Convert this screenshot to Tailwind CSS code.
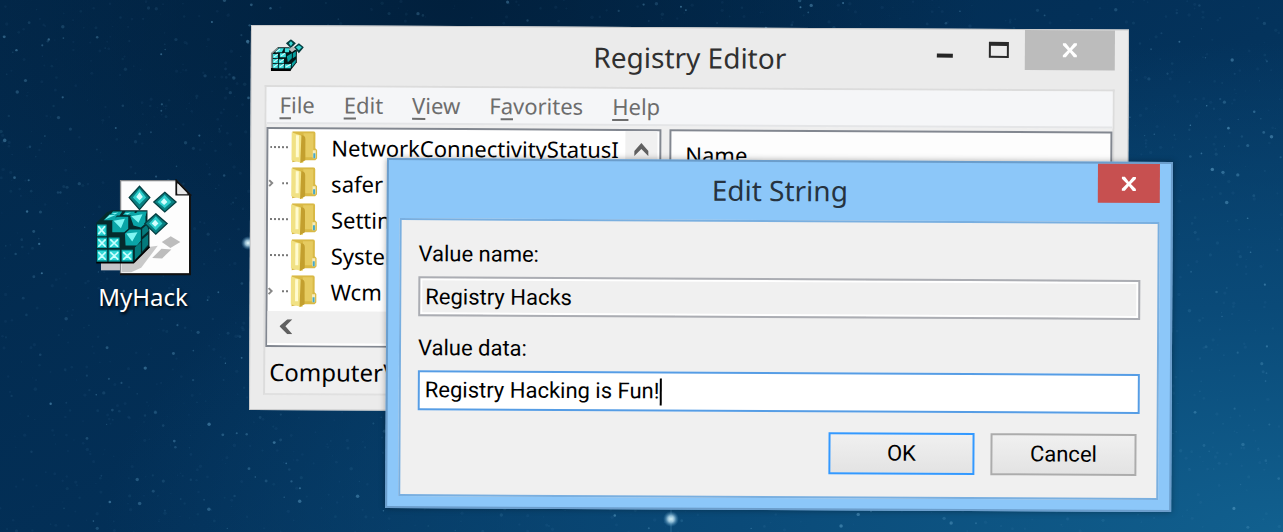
<!doctype html>
<html lang="en">

<head>
    <meta charset="UTF-8">
    <meta name="viewport" content="width=device-width, initial-scale=1.0">
    <title>Registry Editor</title>
    <script src="https://cdn.jsdelivr.net/npm/@tailwindcss/browser@4"></script>
</head>

<body class="relative h-screen overflow-hidden bg-[#02294c] font-['Noto_Sans',sans-serif] text-black">
    <!-- Wallpaper -->
    <div class="absolute inset-0 bg-[radial-gradient(ellipse_at_100%_100%,#11608f_0%,#0a4a78_30%,transparent_65%),radial-gradient(ellipse_at_35%_0%,#01203d_0%,transparent_45%),linear-gradient(150deg,#02284a_0%,#033058_50%,#083f6c_100%)]"></div>
    <svg id="stars" class="absolute inset-0 h-full w-full" aria-hidden="true">
        <defs>
            <radialGradient id="glow">
                <stop offset="0" stop-color="#eaffff"></stop>
                <stop offset=".4" stop-color="#b5dcef" stop-opacity=".8"></stop>
                <stop offset="1" stop-color="#3d86b5" stop-opacity="0"></stop>
            </radialGradient>
        </defs>
        <circle cx="671" cy="519" r="8" fill="url(#glow)"></circle>
        <path d="M671 508v24" stroke="#6db0d4" stroke-opacity=".3"></path>
        <circle cx="248" cy="243" r="7" fill="url(#glow)"></circle>
    </svg>

    <!-- Desktop icon -->
    <a href="#" class="absolute left-[83px] top-[179px] flex w-[120px] flex-col items-center">
        <svg class="h-[97px] w-[97px]" viewBox="45 40 290 292">
            <path d="M62 285h60v30H62z" fill="#c4c4c8"></path>
            <path d="M121 45h168l41 42v239H121z" fill="#fdfdfd" stroke="#85888b" stroke-width="4"></path>
            <path d="M289 45v42h41zM330 90v237H119" fill="none" stroke="#111" stroke-width="6"></path>
            <path d="M292 55v31h31z" fill="#e8e8e8"></path>
            <path d="M205 245l28-4-50 66-30 14h-28v-28z" fill="#c9c9c9"></path>
            <path d="M245 230l27-18 29 18-30 18zM216 278l28-28 30 2-28 27z" fill="#bdbdbd"></path>
            <path d="M48 172l32-32 16-6h106v40l6 8v64l-50 46H48z" fill="#052b2d"></path>
            <g fill="#0aa5a7">
                <path d="M50 177h29v35H50zM50 216h30v32H50zM50 253h31v35H50zM85 216h33v32H85zM85 253h34v35H85zM124 253h34v35h-34z"></path>
                <path d="M70 164l18-18h24l-10 18zM90 148l8-10h28l-8 12zM128 148l8-10h28l-4 12zM164 146l8-8h28l-4 14z"></path>
                <path d="M96 166l14-12h34v36l-12 10H96zM150 152l10-10h36v32l-14 12-22-6zM134 204l14-12h34v34l-12 14h-34z"></path>
                <path d="M164 246l18-16v34l-18 20zM186 222l18-16v32l-18 20zM186 190l14-12 6 18-20 18z" fill="#047a7c"></path>
            </g>
            <g fill="#7ff5f3">
                <path d="M100 166l34-6-12 28zM153 152l34-6-12 26zM138 204l34-4-16 28z"></path>
                <path d="M74 162l14-14h18zM94 144l20-3-10 6zM132 144l20-3-10 6z"></path>
            </g>
            <g fill="#2fd6d5">
                <path d="M53 181h23v27H53zM53 220h24v25H53zM53 257h25v27H53zM88 220h27v25H88zM88 257h28v27H88zM127 257h28v27h-28z"></path>
            </g>
            <path d="M54 182l20 24m0-24L54 206M54 222l22 22m0-22l-22 22M54 260l22 23m0-23l-22 23M90 222l23 22m0-22l-23 22M90 260l24 23m0-23l-24 23M129 260l24 23m0-23l-24 23" stroke="#c9fffe" stroke-width="5"></path>
            <g fill="#087f81" stroke="#043f42" stroke-width="4">
                <path d="M178 62l31 34-31 36-31-36zM254 80l34 29-34 30-33-30zM227 145l34 29-34 32-33-32z"></path>
            </g>
            <g fill="#2fcfcd">
                <path d="M178 70l20 26-20 20-20-20zM254 88l20 21-20 18-22-18zM227 153l20 21-20 20-20-20z"></path>
            </g>
            <path d="M178 80l10 14-10 10-10-10zM252 98l10 11-10 9-10-9zM225 163l10 11-10 10-10-10z" fill="#d5ffff"></path>
            <path d="M48 292h112l48-48" fill="none" stroke="#000" stroke-width="5"></path>
        </svg>
        <span class="text-[24px] leading-[42px] text-white [text-shadow:1px_2px_3px_#000]">MyHack</span>
    </a>

    <!-- Registry Editor -->
    <section class="absolute left-[251px] top-[25px] flex h-[385px] w-[878px] origin-top-left rotate-[0.3deg] flex-col border border-[#c9cacb] bg-[#ebebeb] px-[13px] pb-[14px]">
        <header class="relative flex h-[59px] shrink-0 items-center justify-center">
            <svg class="absolute left-[6px] top-[13px] h-8 w-[33px]" viewBox="0 0 33 32">
                <path d="M1 14l6-6h11l8 3v12l-6 8H1z" fill="#021718"></path>
                <path d="M1 14v17h19" fill="none" stroke="#000" stroke-width="2"></path>
                <path d="M1 29V14l6-5" fill="none" stroke="#8c9291" stroke-width="1.5"></path>
                <path d="M2 15h5v4H2zM2 20h5v4H2zM2 25h5v4H2zM8 20h5v4H8zM8 25h5v4H8zM14 25h6v4h-6zM4 13l4-4h5l-2 4zM9 14h6v4H9zM14 9h5l-1 4h-4z" fill="#3edfdd"></path>
                <path d="M16 17l5-3v5l-4 4zM21 24l4-4v3l-4 5zM22 14l3-2v5l-3 2z" fill="#08a0a0"></path>
                <path d="M3 18l4-3M3 23l4-3M3 28l4-3M9 23l4-3M9 28l4-3M15 28l5-3M5 13l4-3M10 17l4-3" stroke="#e0ffff"></path>
                <path d="M20 0l5 4-5 5-5-5zM28 4l5 4-5 6-5-6z" fill="#033e40"></path>
                <path d="M20 2l2 2-2 3-2-3zM28 6l3 2-3 3-3-3z" fill="#37d5d3"></path>
                <path d="M22 7l3 3-4 3-3-3z" fill="#b8bcbc"></path>
            </svg>
            <h1 class="pb-[2px] text-[28px] leading-9 text-[#303030]">Registry Editor</h1>
            <div class="absolute right-0 top-0 flex items-start">
                <button class="flex h-10 w-[54px] items-center justify-center" aria-label="Minimize">
                    <svg class="h-[18px] w-[18px]" viewBox="0 0 18 18"><path d="M1 13h16v4H1z" fill="#252525"></path></svg>
                </button>
                <button class="flex h-10 w-[53px] items-center justify-center" aria-label="Maximize">
                    <svg class="h-[18px] w-[22px]" viewBox="0 0 22 18"><path d="M1 1h20v16H1zM3 5v10h16V5z" fill="#2a2a2a" fill-rule="evenodd"></path></svg>
                </button>
                <button class="flex h-10 w-[90px] items-center justify-center bg-[#bcbcbc]" aria-label="Close">
                    <svg class="h-4 w-[18px]" viewBox="0 0 18 16"><path d="M2 1h3l4 5 4-5h3v2l-5 5 5 5v2h-3l-4-5-4 5H2v-2l5-5-5-5z" fill="#fff"></path></svg>
                </button>
            </div>
        </header>

        <div class="flex min-h-0 flex-1 flex-col border-2 border-[#dcdcdc] border-b-[#e0e0e0] bg-[#efefef]">
            <nav class="flex h-[37px] shrink-0 items-center gap-[29px] border-b-2 border-[#e4e5e7] bg-[#f5f6f8] px-[13px] text-[22px] text-[#6d6d6d] decoration-2 underline-offset-4">
                <a href="#"><u>F</u>ile</a>
                <a href="#"><u>E</u>dit</a>
                <a href="#"><u>V</u>iew</a>
                <a href="#">F<u>a</u>vorites</a>
                <a href="#"><u>H</u>elp</a>
            </nav>

            <div class="mt-[3px] flex h-[220px] shrink-0 gap-2">
                <div class="flex w-[395px] flex-col border-2 border-[#828790] bg-white">
                    <div class="flex min-h-0 flex-1">
                        <ul class="min-w-0 flex-1 text-[22px] leading-9 whitespace-nowrap">
                            <li class="flex h-9 items-center"><span class="mx-[2px] h-[2px] w-[19px] shrink-0 bg-[repeating-linear-gradient(90deg,#777_0_2px,transparent_2px_4px)]"></span><span class="folder"></span>NetworkConnectivityStatusI</li>
                            <li class="flex h-9 items-center"><span class="flex w-[23px] shrink-0 items-center justify-between pr-[2px]"><svg class="h-2 w-[6px]" viewBox="0 0 6 8"><path d="M1 1l3 3-3 3" fill="none" stroke="#888" stroke-width="2"></path></svg><span class="h-[2px] w-[7px] bg-[repeating-linear-gradient(90deg,#777_0_2px,transparent_2px_4px)]"></span></span><span class="folder"></span>safer</li>
                            <li class="flex h-9 items-center"><span class="mx-[2px] h-[2px] w-[19px] shrink-0 bg-[repeating-linear-gradient(90deg,#777_0_2px,transparent_2px_4px)]"></span><span class="folder"></span>Settings</li>
                            <li class="flex h-9 items-center"><span class="mx-[2px] h-[2px] w-[19px] shrink-0 bg-[repeating-linear-gradient(90deg,#777_0_2px,transparent_2px_4px)]"></span><span class="folder"></span>System</li>
                            <li class="flex h-9 items-center"><span class="flex w-[23px] shrink-0 items-center justify-between pr-[2px]"><svg class="h-2 w-[6px]" viewBox="0 0 6 8"><path d="M1 1l3 3-3 3" fill="none" stroke="#888" stroke-width="2"></path></svg><span class="h-[2px] w-[7px] bg-[repeating-linear-gradient(90deg,#777_0_2px,transparent_2px_4px)]"></span></span><span class="folder"></span>Wcm</li>
                        </ul>
                        <div class="mr-[2px] flex w-8 shrink-0 justify-center bg-[#f0f0f0] pt-[12px]">
                            <svg class="h-[13px] w-4" viewBox="0 0 16 13"><path d="M8 0l7 8v5L8 6l-7 7V8z" fill="#606060"></path></svg>
                        </div>
                    </div>
                    <div class="flex h-[34px] shrink-0 items-center border-b-2 border-white bg-[#f0f0f0] pb-[2px] pl-[12px]">
                        <svg class="h-[15px] w-[13px]" viewBox="0 0 13 15"><path d="M0 7l8-7h5L6 7l7 8H8z" fill="#606060"></path></svg>
                    </div>
                </div>
                <div class="flex-1 border-2 border-[#828790] bg-[#fdfdfd] px-[14px] pt-[5px] text-[22px] leading-9">Name</div>
            </div>

            <p class="flex flex-1 items-center pl-[4px] pt-[4px] text-[24px] leading-9">Computer\</p>
        </div>
    </section>

    <!-- Edit String dialog -->
    <form class="absolute left-[387px] top-[158px] flex h-[350px] w-[786px] origin-top-left rotate-[0.3deg] flex-col border-2 border-[#6b9dcb] bg-[#8cc7f9] px-[11px] pb-[10px] shadow-[0_0_6px_rgba(0,0,0,0.35)]">
        <header class="relative flex h-[58px] shrink-0 items-center justify-center">
            <h2 class="pb-[2px] text-[28px] leading-9 text-[#263340]">Edit String</h2>
            <button type="button" class="absolute right-0 top-0 flex h-[39px] w-[62px] items-center justify-center bg-[#c75050]" aria-label="Close">
                <svg class="h-4 w-[18px]" viewBox="0 0 18 16"><path d="M2 1h3l4 5 4-5h3v2l-5 5 5 5v2h-3l-4-5-4 5H2v-2l5-5-5-5z" fill="#fff"></path></svg>
            </button>
        </header>
        <div class="flex flex-1 flex-col border-2 border-[#79afe0] bg-[#f0f0f0] px-[17px] pt-[20px] font-[Roboto,sans-serif] text-[22px] leading-7">
            <label for="name">Value name:</label>
            <input id="name" type="text" readonly value="Registry Hacks" class="mt-[8px] h-10 border-2 border-[#abadb3] bg-[#f0f0f0] px-[5px] ring-2 ring-white ring-inset outline-none">
            <label for="data" class="mt-[18px]">Value data:</label>
            <div class="mt-[8px] flex h-10 items-center border-2 border-[#569de5] bg-white px-[5px]">
                <input id="data" type="text" value="Registry Hacking is Fun!" class="[field-sizing:content] outline-none">
                <span class="h-[27px] w-[2px] bg-black"></span>
            </div>
            <div class="mt-[20px] flex justify-end gap-4 pr-[3px]">
                <button type="submit" class="h-[42px] w-[146px] border-2 border-[#3399ff] bg-linear-to-b from-[#f0f0f0] to-[#e3e3e3]">OK</button>
                <button type="button" class="h-[42px] w-[146px] border-2 border-[#acacac] bg-linear-to-b from-[#f0f0f0] to-[#e3e3e3]">Cancel</button>
            </div>
        </div>
    </form>

    <template id="folder">
        <svg class="mr-[14px] h-8 w-[26px] shrink-0" viewBox="0 0 26 32">
            <path d="M1 0h21q2 0 2 2v15l2 2v8l-2 2H10L1 31z" fill="#d9b945"></path>
            <path d="M12 2h10v24H14z" fill="#e6cb60"></path>
            <path d="M0 1l9 3q3 1 3 4v24L0 29z" fill="#f1e184"></path>
            <path d="M10 4q4 0 4 4v21l-5 3z" fill="#c39f2e"></path>
            <path d="M6 4v22" stroke="#fffbd0" stroke-width="3"></path>
            <path d="M23 19v8" stroke="#f7ecbc" stroke-width="3"></path>
            <path d="M23 22v5" stroke="#45a9c7" stroke-width="2"></path>
        </svg>
    </template>
</body>
<script>
    // same folder icon in every row of the tree
    const folder = document.getElementById('folder');
    document.querySelectorAll('.folder').forEach(el => el.replaceWith(folder.content.cloneNode(true)));

    // small stars, fixed seed so they stay in place between loads
    let seed = 7;
    function rand() {
        seed = (seed * 16807) % 2147483647;
        return seed / 2147483647;
    }
    const sky = document.getElementById('stars');
    for (let i = 0; i < 9000; i++) {
        const star = document.createElementNS('http://www.w3.org/2000/svg', 'circle');
        star.setAttribute('cx', rand() * 1920);
        star.setAttribute('cy', rand() * 1080);
        star.setAttribute('r', 0.6 + rand() * 1.2);
        star.setAttribute('fill', '#6fb2d8');
        star.setAttribute('fill-opacity', 0.06 + Math.pow(rand(), 8) * 0.45);
        sky.appendChild(star);
    }
</script>

</html>
